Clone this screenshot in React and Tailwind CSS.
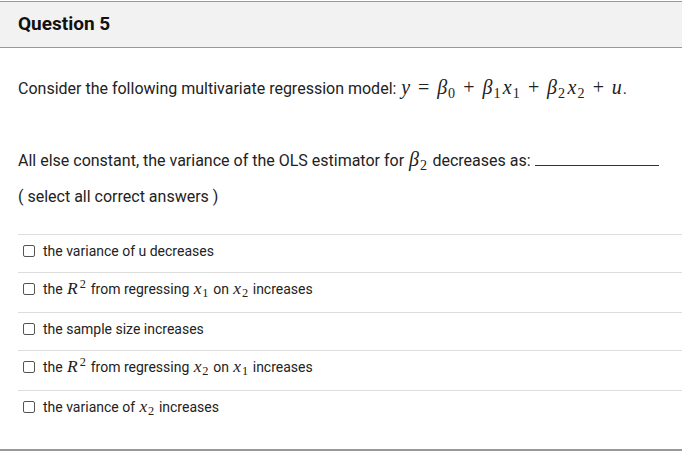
import React from 'react'

const serif = { fontFamily: '"Liberation Serif", "DejaVu Serif", serif' }

const M = ({ children }) => (
  <span className="italic text-[1.25em] leading-none mx-[0.05em]" style={serif}>{children}</span>
)

const Sub = ({ children }) => (
  <sub className="text-[0.88em] not-italic bottom-[-0.25em] mr-[0.1em]" style={serif}>{children}</sub>
)

const Sup = ({ children }) => (
  <sup className="text-[0.88em] not-italic ml-[0.1em] mr-[0.1em]" style={serif}>{children}</sup>
)

const Op = ({ children }) => (
  <span className="mx-[0.34em] text-[1.25em] leading-none" style={serif}>{children}</span>
)

const Checkbox = () => (
  <span className="inline-block mt-[3px] w-[12px] h-[12px] border border-[#555] rounded-[2px] bg-white shrink-0" />
)

const options = [
  { h: 'h-[38px]', text: <>the variance of u decreases</> },
  { h: 'h-[40px]', text: <>the <M>R</M><Sup>2</Sup> from regressing <M>x</M><Sub>1</Sub> on <M>x</M><Sub>2</Sub> increases</> },
  { h: 'h-[38px]', text: <>the sample size increases</> },
  { h: 'h-[40px]', text: <>the <M>R</M><Sup>2</Sup> from regressing <M>x</M><Sub>2</Sub> on <M>x</M><Sub>1</Sub> increases</> },
  { h: 'h-[40px]', text: <>the variance of <M>x</M><Sub>2</Sub> increases</> },
]

export default function App() {
  return (
    <div className="w-[682px] h-[453px] bg-white text-[#222] pt-[1px]" style={{ fontFamily: 'Roboto, "Liberation Sans", sans-serif' }}>
      {/* header */}
      <div className="h-[47px] bg-[#f2f2f2] border-t border-b border-[#999] flex items-center px-[18px]">
        <h2 className="text-[19px] font-bold text-[#111]">Question 5</h2>
      </div>

      <div className="pl-[18px]">
        <p className="mt-[29px] text-[16px] leading-[24px]">
          Consider the following multivariate regression model:{' '}
          <M>y</M><Op>=</Op><M>β</M><Sub>0</Sub><Op>+</Op><M>β</M><Sub>1</Sub><M>x</M><Sub>1</Sub><Op>+</Op><M>β</M><Sub>2</Sub><M>x</M><Sub>2</Sub><Op>+</Op><M>u</M>.
        </p>

        <p className="mt-[48px] text-[16px] leading-[24px]">
          All else constant, the variance of the OLS estimator for <M>β</M><Sub>2</Sub> decreases as:{' '}
          <span className="inline-block w-[124px] border-b border-[#333] align-baseline" />
        </p>
        <p className="mt-[12px] text-[16px] leading-[24px]">( select all correct answers )</p>

        {/* options */}
        <div className="mt-[25px] border-t border-[#ddd]">
          {options.map((o, i) => (
            <div
              key={i}
              className={`${o.h} flex items-start gap-[8px] pl-[5px] pt-[7px] text-[14px] leading-[18px] ${i < options.length - 1 ? 'border-b border-[#ddd]' : ''}`}
            >
              <Checkbox />
              <span>{o.text}</span>
            </div>
          ))}
        </div>
      </div>
      <div className="mt-[18px] border-b-2 border-[#999]" />
    </div>
  )
}
